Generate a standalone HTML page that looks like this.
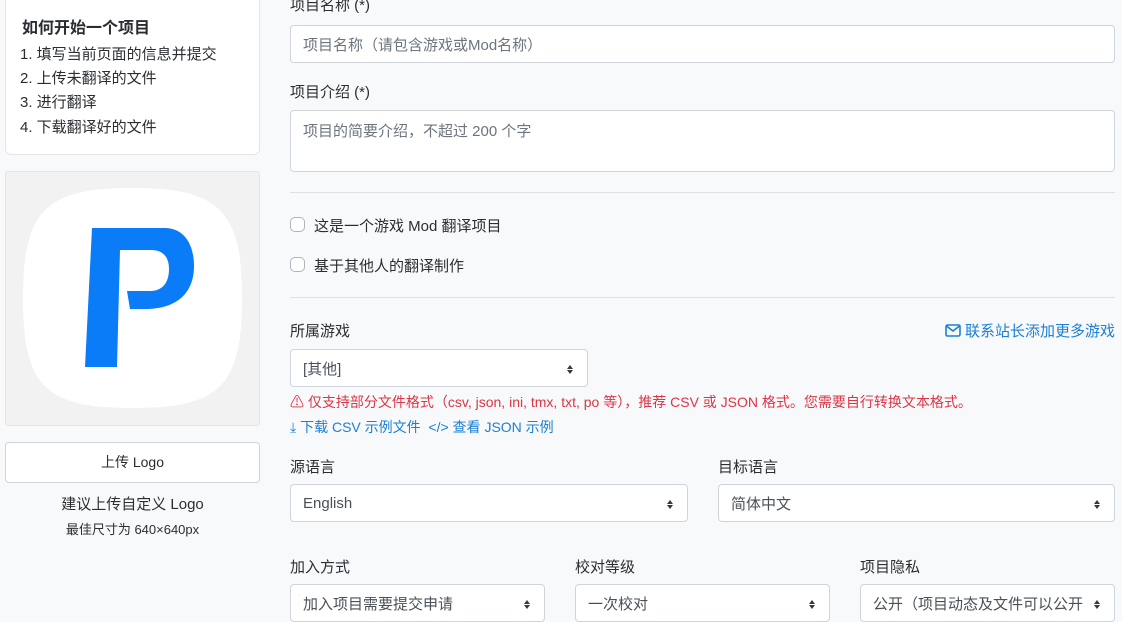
<!DOCTYPE html><html><head><meta charset="utf-8"><style>
*{box-sizing:border-box;margin:0;padding:0}
body{width:1122px;height:621px;overflow:hidden;background:#f8f9fa;font-family:"Liberation Sans","Noto Sans CJK SC",sans-serif;color:#2a2e33;font-size:15px;position:relative}
.a{position:absolute}
.card{background:#fff;border:1px solid #e3e5e8;border-radius:6px}
.inp{position:absolute;background:#fff;border:1px solid #ced4da;border-radius:4px;padding:0 12px;color:#495057;font-size:15px;display:flex;align-items:center}
.ph{color:#6c757d}
.sel:after{content:"";position:absolute;right:14px;top:50%;margin-top:-6px;border:3.5px solid transparent;border-bottom:4px solid #343a40;width:0;height:0}
.sel:before{content:"";position:absolute;right:14px;top:50%;margin-top:2px;border:3.5px solid transparent;border-top:4px solid #343a40;width:0;height:0}
.hr{position:absolute;left:290px;width:825px;height:1px;background:#dee2e6}
.cb{position:absolute;width:15px;height:15px;border:1px solid #adb5bd;border-radius:5px;background:#fff}
.blue{color:#1a7fd6}
</style></head><body>
<div class="a card" style="left:5px;top:-8px;width:255px;height:163px"></div>
<div class="a" style="left:22px;top:14px;font-weight:bold;font-size:16px">如何开始一个项目</div>
<div class="a" style="left:20px;top:43px;line-height:24.2px;font-size:15px">1. 填写当前页面的信息并提交<br>2. 上传未翻译的文件<br>3. 进行翻译<br>4. 下载翻译好的文件</div>
<div class="a" style="left:5px;top:171px;width:255px;height:255px;background:#f2f2f2;border:1px solid #e3e5e8;border-radius:3px"></div>
<svg class="a" style="left:5px;top:171px" width="255" height="255" viewBox="0 0 255 255">
<path d="M127 17 C215 17 237 40 237 127 C237 215 215 237 127 237 C40 237 18 215 18 127 C18 40 40 17 127 17Z" fill="#fff"/>
<path d="M87 57 L160 57 C178 57 189 72 189 95 C189 122 172 138 140 138 L125 138 L122 120 L145 120 C158 120 164 111 164 98 C164 86 158 79 146 79 L115 79 L112 196 L80 196 Z" fill="#0a7cf7"/>
</svg>
<div class="a card" style="left:5px;top:442px;width:255px;height:41px;border:1px solid #ced4da;border-radius:4px;text-align:center;line-height:39px;font-size:14px">上传 Logo</div>
<div class="a" style="left:5px;top:493px;width:255px;text-align:center;font-size:15px">建议上传自定义 Logo</div>
<div class="a" style="left:5px;top:519px;width:255px;text-align:center;font-size:13px">最佳尺寸为 640×640px</div>

<div class="a" style="left:290px;top:-6px">项目名称 (*)</div>
<div class="inp" style="left:290px;top:25px;width:825px;height:38px"><span class="ph">项目名称（请包含游戏或Mod名称）</span></div>
<div class="a" style="left:290px;top:81px">项目介绍 (*)</div>
<div class="inp" style="left:290px;top:110px;width:825px;height:62px;align-items:flex-start;padding-top:9px"><span class="ph">项目的简要介绍，不超过 200 个字</span></div>
<div class="hr" style="top:192px"></div>
<div class="cb" style="left:290px;top:217px"></div><div class="a" style="left:314px;top:215px">这是一个游戏 Mod 翻译项目</div>
<div class="cb" style="left:290px;top:257px"></div><div class="a" style="left:314px;top:255px">基于其他人的翻译制作</div>
<div class="hr" style="top:297px"></div>
<div class="a" style="left:290px;top:320px">所属游戏</div>
<div class="a blue" style="right:7px;top:320px"><svg width="16" height="13" viewBox="0 0 16 13" style="vertical-align:-1px"><rect x="1" y="1" width="14" height="11" rx="1.5" fill="none" stroke="#1a7fd6" stroke-width="1.6"/><path d="M1.5 2 L8 7 L14.5 2" fill="none" stroke="#1a7fd6" stroke-width="1.6"/></svg> 联系站长添加更多游戏</div>
<div class="inp sel" style="left:290px;top:349px;width:298px;height:38px">[其他]</div>
<div class="a" style="left:290px;top:392px;font-size:14px;color:#dc3545;white-space:nowrap">⚠ 仅支持部分文件格式（csv, json, ini, tmx, txt, po 等），推荐 CSV 或 JSON 格式。您需要自行转换文本格式。</div>
<div class="a blue" style="left:290px;top:417px;font-size:14px">⤓ 下载 CSV 示例文件 &nbsp;&lt;/&gt; 查看 JSON 示例</div>
<div class="a" style="left:290px;top:456px">源语言</div>
<div class="a" style="left:718px;top:456px">目标语言</div>
<div class="inp sel" style="left:290px;top:484px;width:398px;height:38px">English</div>
<div class="inp sel" style="left:718px;top:484px;width:397px;height:38px">简体中文</div>
<div class="a" style="left:290px;top:556px">加入方式</div>
<div class="a" style="left:575px;top:556px">校对等级</div>
<div class="a" style="left:860px;top:556px">项目隐私</div>
<div class="inp sel" style="left:290px;top:584px;width:255px;height:38px">加入项目需要提交申请</div>
<div class="inp sel" style="left:575px;top:584px;width:255px;height:38px">一次校对</div>
<div class="inp sel" style="left:860px;top:584px;width:255px;height:38px;overflow:hidden;white-space:nowrap">公开（项目动态及文件可以公开</div>
</body></html>
